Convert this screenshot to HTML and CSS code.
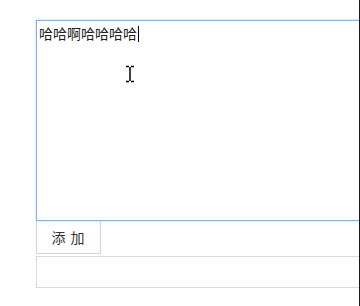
FILE: index.html
```html
<!DOCTYPE html>
<html>
<head>
<meta charset="utf-8">
<link rel="stylesheet" href="styles.css">
</head>
<body>
<div class="frame">
  <div class="panel">
    <div class="editor">哈哈啊哈哈哈哈<span class="caret"></span></div>
    <div class="btn">添 加</div>
    <div class="field"></div>
  </div>
  <svg class="ibeam" width="10" height="18" viewBox="0 0 10 18">
    <path d="M1 1.5h3M6 1.5h3M5 2v14M1 16.5h3M6 16.5h3" stroke="#000" stroke-width="1.5" fill="none"/>
  </svg>
</div>
</body>
</html>
```
FILE: styles.css
```css
html, body {
  margin: 0;
  padding: 0;
  background: #fff;
}
.frame {
  position: relative;
  width: 359px;
  height: 306px;
  border-right: 1px solid #1a1a1a;
  overflow: hidden;
  font-family: "Noto Sans CJK SC", "Noto Sans", sans-serif;
}
.panel {
  padding: 20px 0 0 36px;
  display: flex;
  flex-direction: column;
  align-items: flex-start;
}
.editor {
  box-sizing: border-box;
  width: 360px;
  height: 201px;
  border: 1px solid #8aaede;
  box-shadow: 0 0 2px #a9c4ee;
  padding: 3px 2px;
  font-size: 14px;
  line-height: 18px;
  color: #1e1e1e;
}
.caret {
  display: inline-block;
  width: 1px;
  height: 16px;
  background: #000;
  vertical-align: -3px;
  margin-left: 1px;
}
.btn {
  box-sizing: border-box;
  width: 65px;
  height: 33px;
  border: 1px solid #d4d4d4;
  border-top: none;
  font-size: 14px;
  color: #333;
  display: flex;
  align-items: center;
  justify-content: center;
  letter-spacing: 1px;
}
.field {
  box-sizing: border-box;
  width: 340px;
  height: 32px;
  margin-top: 2px;
  border: 1px solid #d9d9d9;
}
.ibeam {
  position: absolute;
  left: 125px;
  top: 65px;
}
```
